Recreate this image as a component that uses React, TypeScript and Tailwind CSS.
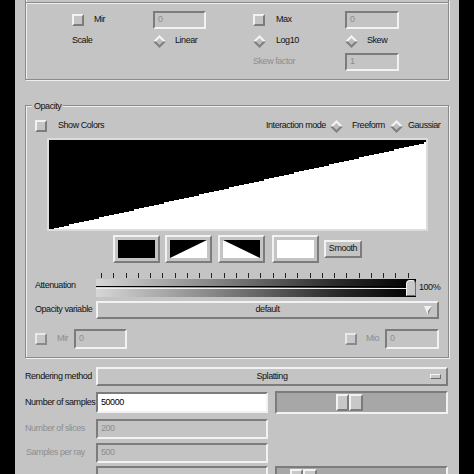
import type { ReactNode } from "react";

const raised = "border-2 border-t-[#f2f2f2] border-l-[#f2f2f2] border-b-[#7c7c7c] border-r-[#7c7c7c]";
const sunken = "border-2 border-t-[#7c7c7c] border-l-[#7c7c7c] border-b-[#f2f2f2] border-r-[#f2f2f2]";
const etched = "border border-[#8a8a8a] shadow-[1px_1px_0_#efefef,inset_1px_1px_0_#efefef]";

function Check({ disabled }: { disabled?: boolean }) {
  return (
    <div
      className={`h-[12px] w-[12px] shrink-0 ${raised} ${disabled ? "bg-[#c8c8c8] opacity-80" : "bg-[#c4c4c4]"}`}
    />
  );
}

function Diamond() {
  return (
    <svg width="13" height="13" viewBox="0 0 13 13" className="shrink-0">
      <polygon points="6.5,0 13,6.5 0,6.5" fill="#f4f4f4" />
      <polygon points="0,6.5 13,6.5 6.5,13" fill="#808080" />
      <polygon points="6.5,3 10,6.5 6.5,10 3,6.5" fill="#bdbdbd" />
    </svg>
  );
}

function Field({ value, width, white, disabled }: { value: string; width: string; white?: boolean; disabled?: boolean }) {
  return (
    <div
      className={`flex h-full items-center px-[3px] ${sunken} ${width} ${white ? "bg-white text-black" : "bg-[#c4c4c4]"} ${
        disabled ? "text-[#8e8e8e]" : ""
      }`}
    >
      {value}
    </div>
  );
}

function Label({ children, className = "" }: { children: ReactNode; className?: string }) {
  return <span className={`whitespace-nowrap ${className}`}>{children}</span>;
}

function Trough({ thumbLeft }: { thumbLeft: string }) {
  return (
    <div className={`flex h-full w-[173px] items-center bg-[#a7a7a7] ${sunken}`}>
      <div className={`flex h-[17px] ${thumbLeft}`}>
        <div className={`h-full w-[13px] bg-[#c8c8c8] ${raised}`} />
        <div className={`h-full w-[14px] bg-[#c8c8c8] ${raised}`} />
      </div>
    </div>
  );
}

function ramp() {
  const w = 377;
  const h = 89;
  const pts: string[] = [`0,${h}`];
  for (let x = 0; x <= w; x += 5) {
    const y = Math.round(h - (x / w) * (h - 2));
    pts.push(`${x},${y}`, `${Math.min(x + 5, w)},${y}`);
  }
  pts.push(`${w},2`, `${w},${h}`);
  return pts.join(" ");
}

function Preset({ kind }: { kind: "black" | "up" | "down" | "white" }) {
  return (
    <div className={`h-[28px] w-[47px] p-[3px] bg-[#c4c4c4] ${raised}`}>
      <svg width="100%" height="100%" viewBox="0 0 39 20" preserveAspectRatio="none" className="block">
        <rect width="39" height="20" fill={kind === "white" ? "#fff" : "#000"} />
        {kind === "up" && <polygon points="0,20 39,0 39,20" fill="#fff" />}
        {kind === "down" && <polygon points="0,0 39,20 0,20" fill="#fff" />}
      </svg>
    </div>
  );
}

export default function App() {
  return (
    <div className="flex h-[474px] w-[474px] overflow-hidden bg-black font-['Liberation_Sans',Arial,sans-serif] text-[9px] tracking-[-0.45px] text-[#111]">
      <div className="ml-[15px] flex h-full w-[444px] shrink-0 flex-col bg-[#c4c4c4]">
        {/* scale group */}
        <div className={`ml-[10px] h-[80px] w-[424px] shrink-0 border border-t-0 border-[#8a8a8a] shadow-[1px_1px_0_#efefef,inset_1px_0_0_#efefef]`}>
          <div className="mt-[2px] h-[2px] border-t border-b border-t-[#8a8a8a] border-b-[#efefef]" />
          <div className="mt-[7px] grid grid-cols-[22px_59px_22px_78px_23px_69px_22px_1fr] grid-rows-[18px_18px_18px] items-center gap-y-[3px] pl-[46px]">
            <Check />
            <Label>Mir</Label>
            <div className="col-span-2 h-full">
              <Field value="0" width="w-[53px]" disabled />
            </div>
            <Check />
            <Label>Max</Label>
            <div className="col-span-2 h-full">
              <Field value="0" width="w-[54px]" disabled />
            </div>

            <Label>Scale</Label>
            <span />
            <Diamond />
            <Label>Linear</Label>
            <Diamond />
            <Label>Log10</Label>
            <Diamond />
            <Label>Skew</Label>

            <Label className="col-span-2 col-start-5 text-[#8e8e8e]">Skew factor</Label>
            <div className="col-span-2 h-full">
              <Field value="1" width="w-[54px]" disabled />
            </div>
          </div>
        </div>

        {/* opacity group */}
        <div className={`relative ml-[10px] mt-[25px] h-[253px] w-[424px] shrink-0 ${etched}`}>
          <span className="absolute left-[6px] top-[-6px] bg-[#c4c4c4] px-[2px]">Opacity</span>

          <div className="mt-[13px] flex h-[14px] items-center pl-[9px]">
            <div className="flex w-[231px] shrink-0 items-center">
              <Check />
              <Label className="ml-[11px]">Show Colors</Label>
            </div>
            <Label className="w-[64px] shrink-0">Interaction mode</Label>
            <Diamond />
            <Label className="ml-[9px] w-[38px] shrink-0">Freeform</Label>
            <Diamond />
            <Label className="ml-[5px] w-[33px] overflow-hidden">Gaussian</Label>
          </div>

          <div className="ml-[21px] mt-[5px] h-[93px] w-[381px] border-2 border-[#dcdcdc] bg-black">
            <svg width="377" height="89" viewBox="0 0 377 89" className="block">
              <polygon points={ramp()} fill="#fff" />
            </svg>
          </div>

          <div className="ml-[87px] mt-[4px] flex h-[28px] items-center">
            <Preset kind="black" />
            <div className="ml-[5px]">
              <Preset kind="up" />
            </div>
            <div className="ml-[6px]">
              <Preset kind="down" />
            </div>
            <div className="ml-[7px]">
              <Preset kind="white" />
            </div>
            <div className={`ml-[5px] flex h-[18px] w-[38px] items-center justify-center bg-[#c4c4c4] ${raised}`}>Smooth</div>
          </div>

          <div className="ml-[75px] mt-[10px] flex h-[5px] w-[308px] justify-between">
            {Array.from({ length: 26 }, (_, i) => (
              <div key={i} className="h-full w-px bg-[#222]" />
            ))}
          </div>

          <div className="mt-[1px] flex h-[18px] items-center pl-[9px]">
            <Label className="-mt-[5px] w-[61px] shrink-0">Attenuation</Label>
            <div className="relative h-full w-[320px] bg-[linear-gradient(to_right,#d6d6d6,#8a8a8a_35%,#2a2a2a_75%,#000)]">
              <div className="absolute left-0 right-[10px] top-[7px] h-[1px] bg-black" />
              <div className="absolute left-0 right-[10px] top-[9px] h-[1px] bg-[#eee]" />
              <div className="absolute right-0 top-[1px] h-[16px] w-[10px] rounded-t-[4px] border border-t-[#f4f4f4] border-l-[#f4f4f4] border-b-[#6a6a6a] border-r-[#6a6a6a] bg-[#c8c8c8]" />
            </div>
            <Label className="ml-[3px]">100%</Label>
          </div>

          <div className="mt-[4px] flex h-[18px] items-center pl-[9px]">
            <Label className="w-[61px] shrink-0">Opacity variable</Label>
            <div className={`relative flex h-full w-[343px] items-center justify-center bg-[#c4c4c4] ${raised}`}>
              default
              <svg width="8" height="9" viewBox="0 0 8 9" className="absolute right-[5px] top-[3px]">
                <polygon points="0,0 8,0 4,9" fill="#f2f2f2" />
                <polygon points="8,0 4,9 4,5" fill="#7c7c7c" />
              </svg>
            </div>
          </div>

          <div className="mt-[10px] flex h-[20px] items-center pl-[9px] text-[#8e8e8e]">
            <Check disabled />
            <Label className="ml-[10px] w-[17px] shrink-0">Mir</Label>
            <Field value="0" width="w-[53px]" disabled />
            <div className="ml-[218px]">
              <Check disabled />
            </div>
            <Label className="ml-[9px] w-[19px] shrink-0">Mio</Label>
            <Field value="0" width="w-[54px]" disabled />
          </div>
        </div>

        {/* render settings */}
        <div className="mt-[9px] flex h-[19px] shrink-0 items-center pl-[10px]">
          <Label className="w-[71px] shrink-0">Rendering method</Label>
          <div className={`relative flex h-full w-[352px] items-center justify-center bg-[#c4c4c4] ${raised}`}>
            Splatting
            <div className="absolute right-[5px] top-[5px] h-[5px] w-[11px] border border-t-[#f4f4f4] border-l-[#f4f4f4] border-b-[#6a6a6a] border-r-[#6a6a6a] bg-[#c8c8c8]" />
          </div>
        </div>

        <div className="mt-[5px] flex h-[23px] shrink-0 items-center pl-[10px]">
          <Label className="w-[71px] shrink-0">Number of samples</Label>
          <div className="h-[21px]">
            <Field value="50000" width="w-[172px]" white />
          </div>
          <div className="ml-[7px] h-full">
            <Trough thumbLeft="ml-[59px]" />
          </div>
        </div>

        <div className="mt-[5px] flex h-[20px] shrink-0 items-center pl-[10px] text-[#8e8e8e]">
          <Label className="w-[71px] shrink-0">Number of slices</Label>
          <Field value="200" width="w-[172px]" disabled />
        </div>

        <div className="mt-[4px] flex h-[20px] shrink-0 items-center pl-[11px] text-[#8e8e8e]">
          <Label className="w-[70px] shrink-0">Samples per ray</Label>
          <Field value="500" width="w-[172px]" disabled />
        </div>

        <div className="mt-[3px] flex h-[23px] shrink-0 items-center pl-[81px]">
          <Field value="" width="w-[172px]" disabled />
          <div className="ml-[7px] h-full">
            <Trough thumbLeft="ml-[13px]" />
          </div>
        </div>
      </div>
    </div>
  );
}
